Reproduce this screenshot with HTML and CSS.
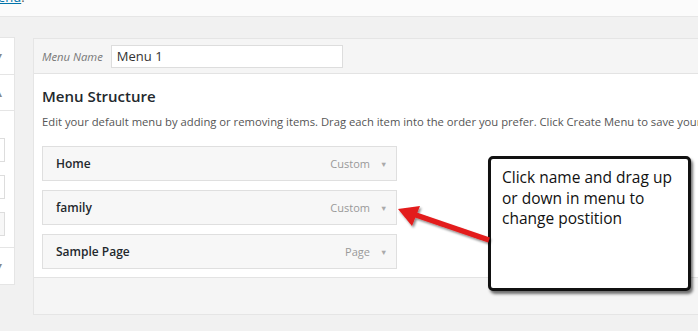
FILE: index.html
```html
<!DOCTYPE html>
<html>
<head>
<meta charset="utf-8">
<link rel="stylesheet" href="styles.css">
</head>
<body>
<div class="topbar"><div class="toptext"><a class="toplink" href="#">enu</a><span class="dot">.</span></div></div>
<div class="layout">
  <aside class="side">
    <div class="side-row"><span class="caret">▾</span></div>
    <div class="side-row"><span class="caret">▴</span></div>
    <div class="side-body">
      <div class="side-input"></div>
      <div class="side-input"></div>
      <div class="side-input"></div>
    </div>
    <div class="side-row last"><span class="caret">▾</span></div>
  </aside>
  <main class="panel">
    <div class="panel-head">
      <label class="name-label">Menu Name</label>
      <div class="name-input">Menu 1</div>
    </div>
    <div class="panel-body">
      <h3 class="title">Menu Structure</h3>
      <p class="desc">Edit your default menu by adding or removing items. Drag each item into the order you prefer. Click Create Menu to save your changes.</p>
      <ul class="items">
        <li class="item"><span class="item-title">Home</span><span class="item-type">Custom</span><span class="item-arrow">▼</span></li>
        <li class="item"><span class="item-title">family</span><span class="item-type">Custom</span><span class="item-arrow">▼</span></li>
        <li class="item"><span class="item-title">Sample Page</span><span class="item-type">Page</span><span class="item-arrow">▼</span></li>
      </ul>
    </div>
    <div class="panel-foot"></div>
  </main>
</div>
<div class="callout">Click name and drag up or down in menu to change postition</div>
<svg class="arrow" width="110" height="50" viewBox="0 0 110 50">
  <defs>
    <filter id="sh" x="-20%" y="-40%" width="140%" height="180%">
      <feDropShadow dx="1.5" dy="2" stdDeviation="1.2" flood-color="#000" flood-opacity="0.45"/>
    </filter>
  </defs>
  <g filter="url(#sh)">
    <line x1="17" y1="10" x2="93" y2="36" stroke="#e31b1b" stroke-width="5.5"/>
    <polygon points="2,5 24,2 16,22" fill="#e31b1b"/>
  </g>
</svg>
</body>
</html>
```
FILE: styles.css
```css
html, body {
  margin: 0;
  padding: 0;
}
body {
  background: #f1f1f1;
  font-family: "Open Sans", "Noto Sans", sans-serif;
  color: #444;
  width: 698px;
  height: 331px;
  overflow: hidden;
  position: relative;
}
.topbar {
  height: 17px;
  box-sizing: border-box;
  background: #fbfbfb;
  border-bottom: 1px solid #e6e6e6;
  overflow: hidden;
}
.toptext {
  margin-top: -11px;
  margin-left: -2px;
  font-size: 13px;
  line-height: 17px;
}
.toplink {
  color: #0073aa;
  text-decoration: underline;
}
.dot {
  color: #555;
}
.layout {
  display: flex;
  align-items: flex-start;
  gap: 18px;
  padding-top: 20px;
}
.side {
  flex: none;
  width: 16px;
  margin-left: -1px;
  background: #fff;
  border: 1px solid #e5e5e5;
  box-sizing: border-box;
  overflow: hidden;
  height: 248px;
  display: flex;
  flex-direction: column;
}
.side-row {
  height: 36px;
  border-bottom: 1px solid #e5e5e5;
  position: relative;
  flex: none;
}
.side-row.last {
  border-bottom: none;
  border-top: 1px solid #e5e5e5;
}
.side-row + .side-row {
  height: 35px;
}
.caret {
  position: absolute;
  right: 12px;
  top: 9px;
  font-size: 12px;
  color: #888;
}
.side-body {
  flex: 1;
  display: flex;
  flex-direction: column;
  gap: 13px;
  padding-top: 27px;
}
.side-input {
  width: 4px;
  height: 22px;
  border: 1px solid #ddd;
  border-left: none;
  background: #fff;
}
.side-input:nth-child(3) {
  background: #f7f7f7;
}
.panel {
  width: 680px;
  flex: none;
  margin-top: 1px;
  background: #fff;
  border: 1px solid #e5e5e5;
  box-sizing: border-box;
}
.panel-head {
  height: 35px;
  background: #f5f5f5;
  border-bottom: 1px solid #e3e3e3;
  box-sizing: border-box;
  display: flex;
  align-items: center;
  padding-left: 8px;
  gap: 8px;
}
.name-label {
  font-size: 11.3px;
  font-style: italic;
  color: #777;
}
.name-input {
  width: 232px;
  height: 23px;
  box-sizing: border-box;
  border: 1px solid #ddd;
  background: #fff;
  font-size: 13px;
  line-height: 21px;
  padding-left: 5px;
  color: #333;
}
.panel-body {
  padding: 12px 8px 8px;
}
.title {
  margin: 0;
  font-size: 15px;
  font-weight: 600;
  color: #23282d;
  line-height: 20px;
}
.desc {
  margin: 8px 0 0;
  font-size: 11.25px;
  color: #555;
  line-height: 16px;
  white-space: nowrap;
}
.items {
  list-style: none;
  margin: 16px 0 0;
  padding: 0;
  display: flex;
  flex-direction: column;
  gap: 9px;
}
.item {
  width: 355px;
  height: 35px;
  box-sizing: border-box;
  border: 1px solid #dfdfdf;
  background: #f7f7f7;
  display: flex;
  align-items: center;
  padding: 0 8px 0 13px;
}
.item-title {
  flex: 1;
  font-size: 12px;
  font-weight: 600;
  color: #23282d;
}
.item-type {
  font-size: 11px;
  color: #999;
  margin-right: 10px;
}
.item-arrow {
  font-size: 7.5px;
  color: #aaa;
  width: 8px;
}
.panel-foot {
  height: 36px;
  background: #f5f5f5;
  border-top: 1px solid #e3e3e3;
}
.callout {
  position: absolute;
  left: 488px;
  top: 156px;
  width: 203px;
  height: 135px;
  box-sizing: border-box;
  border: 3px solid #111;
  border-radius: 5px;
  background: #fff;
  box-shadow: 2px 3px 3px rgba(0,0,0,0.55);
  padding: 8px 8px 0 11px;
  font-family: "Open Sans", "Noto Sans", sans-serif;
  font-size: 15.5px;
  line-height: 20.5px;
  color: #111;
}
.arrow {
  position: absolute;
  left: 396px;
  top: 204px;
}
```
